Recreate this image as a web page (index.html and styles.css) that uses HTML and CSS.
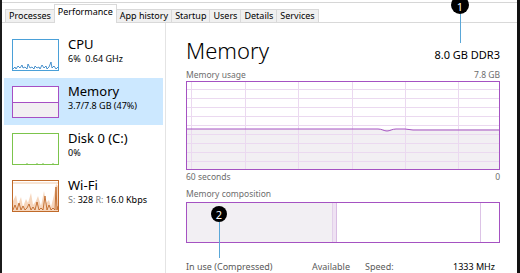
FILE: index.html
```
<html>

<head>
  <title>Task Manager - Performance</title>
  <meta charset="UTF-8">
  <link rel="stylesheet" href="styles.css">
</head>

<body>
  <div id="app">
    <div class="menubar"></div>

    <div class="tabs">
      <span class="tab">Processes</span>
      <span class="tab active">Performance</span>
      <span class="tab">App history</span>
      <span class="tab">Startup</span>
      <span class="tab">Users</span>
      <span class="tab">Details</span>
      <span class="tab">Services</span>
    </div>

    <div class="content">
      <!-- 左侧资源列表 -->
      <div class="sidebar">
        <div class="item">
          <div class="thumb thumb-cpu">
            <svg width="45" height="30" viewBox="0 0 45 30">
              <polyline fill="none" stroke="#1f78c1" stroke-width="0.8"
                points="0,29 2,27 3,29 5,26 7,28 9,25 10,28 12,27 14,29 15,24 17,28 19,27 21,29 22,26 24,28 26,27 27,29 29,25 31,28 33,26 34,29 36,27 38,22 39,28 41,26 43,29 45,27" />
            </svg>
          </div>
          <div class="item-text">
            <p class="item-title">CPU</p>
            <p class="item-sub">6%&nbsp; 0.64 GHz</p>
          </div>
        </div>
        <div class="item selected">
          <div class="thumb thumb-mem">
            <div class="mem-top"></div>
            <div class="mem-bottom"></div>
          </div>
          <div class="item-text">
            <p class="item-title">Memory</p>
            <p class="item-sub">3.7/7.8 GB (47%)</p>
          </div>
        </div>
        <div class="item">
          <div class="thumb thumb-disk">
            <svg width="45" height="30" viewBox="0 0 45 30">
              <path d="M14 29v1M24 29v1M30 29v1M40 29v1" stroke="#7cc44c" stroke-width="1" />
            </svg>
          </div>
          <div class="item-text">
            <p class="item-title">Disk 0 (C:)</p>
            <p class="item-sub">0%</p>
          </div>
        </div>
        <div class="item">
          <div class="thumb thumb-wifi">
            <svg width="45" height="30" viewBox="0 0 45 30">
              <line x1="0" y1="2" x2="45" y2="2" stroke="#f0c9a8" stroke-width="1" />
              <polygon fill="#f6d6bd"
                points="0,30 0,20 3,14 5,24 8,16 10,26 13,18 15,22 18,12 20,24 23,20 25,15 28,25 31,10 33,22 36,19 38,26 41,14 43,3 45,5 45,30" />
              <polyline fill="none" stroke="#b95a17" stroke-width="0.8"
                points="0,29 2,24 4,29 6,22 8,29 10,25 12,29 14,27 16,23 18,29 20,26 22,29 24,21 26,29 28,27 30,29 32,15 34,29 36,24 38,29 40,27 42,29 43,6 44,29 45,25" />
            </svg>
          </div>
          <div class="item-text">
            <p class="item-title">Wi-Fi</p>
            <p class="item-sub"><span class="dim">S:</span> 328 <span class="dim">R:</span> 16.0 Kbps</p>
          </div>
        </div>
      </div>

      <!-- 右侧详细信息 -->
      <div class="panel">
        <div class="panel-head">
          <p class="panel-title">Memory</p>
          <p class="panel-spec">8.0 GB DDR3</p>
        </div>

        <div class="caption">
          <span>Memory usage</span>
          <span>7.8 GB</span>
        </div>
        <div class="chart">
          <svg width="314" height="89" viewBox="0 0 314 89">
            <rect x="0" y="48" width="314" height="41" fill="#f2eff3" />
            <g stroke="#ebd9f0" stroke-width="1">
              <path d="M0 8.5H314M0 17.5H314M0 26.5H314M0 35.5H314M0 44.5H314M0 53.5H314M0 62.5H314M0 71.5H314M0 80.5H314" />
              <path d="M5.5 0V89M59.5 0V89M112.5 0V89M166.5 0V89M219.5 0V89M272.5 0V89" />
            </g>
            <path d="M0 48H192C196 48 198 50 201 50C204 50 206 48 210 48H219C222 48 224 49 227 49H314" fill="none" stroke="#a552c2" stroke-width="1" />
            <rect x="0.5" y="0.5" width="313" height="88" fill="none" stroke="#a552c2" stroke-width="1" />
          </svg>
        </div>
        <div class="caption axis">
          <span>60 seconds</span>
          <span>0</span>
        </div>

        <div class="caption comp-label">
          <span>Memory composition</span>
        </div>
        <div class="composition">
          <div class="seg seg-inuse" style="width: 145px"></div>
          <div class="seg seg-modified" style="width: 3px"></div>
          <div class="seg seg-standby" style="width: 143px"></div>
          <div class="seg seg-free"></div>
        </div>

        <div class="stats">
          <span class="stat-inuse">In use (Compressed)</span>
          <span class="stat-avail">Available</span>
          <span class="stat-speed">Speed:</span>
          <span class="stat-value">1333 MHz</span>
        </div>
      </div>
    </div>

    <!-- 标注 -->
    <div class="callout callout-1"><span class="badge"><span class="num">1</span></span></div>
    <div class="callout callout-2"><span class="badge"><span class="num">2</span></span></div>
  </div>
</body>

</html>
```

FILE: styles.css
```
body {
  font-family: "Noto Sans", "Open Sans", sans-serif;
  background-color: white;
  color: black;
  margin: 0;
  padding: 0;
}

p {
  margin: 0;
}

#app {
  position: relative;
  width: 515px;
  height: 273px;
  border-left: 2px solid #1b1b1b;
  border-right: 3px solid #111;
  overflow: hidden;
  display: flex;
  flex-direction: column;
}

/** 顶部菜单残留 */
.menubar {
  height: 2px;
  border-bottom: 1px solid #d6d6d6;
}

/** 标签页 */
.tabs {
  display: flex;
  flex-direction: row;
  align-items: flex-end;
  height: 19px;
  padding-left: 3px;
  border-bottom: 1px solid #d9d9d9;
}

.tab {
  height: 12px;
  line-height: 12px;
  padding: 0 3px;
  font-size: 9px;
  background-color: #f0f0f0;
  border: 1px solid #d9d9d9;
  border-bottom: none;
  margin-right: -1px;
}

.tab.active {
  height: 18px;
  line-height: 14px;
  background-color: white;
  margin-bottom: -1px;
  position: relative;
}

.content {
  display: flex;
  flex-direction: row;
  flex-grow: 1;
}

/** 左侧列表 */
.sidebar {
  width: 163px;
  border-right: 1px solid #e4e4e4;
  padding-top: 8px;
}

.item {
  display: flex;
  flex-direction: row;
  height: 47px;
  margin-left: 2px;
  width: 159px;
  padding: 8px 0 0 8px;
  box-sizing: border-box;
}

.item.selected {
  background-color: #cce8ff;
}

.thumb {
  width: 45px;
  height: 30px;
  border: 1px solid;
  background-color: white;
  flex-shrink: 0;
}

.thumb svg {
  display: block;
}

.thumb-cpu {
  border-color: #4aa0d8;
}

.thumb-mem {
  border-color: #a64fc4;
  display: flex;
  flex-direction: column;
}

.mem-top {
  height: 15px;
  background-color: white;
  border-bottom: 1px solid #a64fc4;
}

.mem-bottom {
  flex-grow: 1;
  background-color: #f2eff2;
}

.thumb-disk {
  border-color: #7cc44c;
}

.thumb-wifi {
  border-color: #c06a2a;
}

.item-text {
  margin-left: 9px;
  margin-top: -3px;
}

.item-title {
  font-size: 13px;
  line-height: 17px;
}

.item-sub {
  font-size: 9px;
  line-height: 11px;
}

.dim {
  color: #7a7a7a;
}

/** 右侧面板 */
.panel {
  flex-grow: 1;
  padding: 16px 17px 0 20px;
  display: flex;
  flex-direction: column;
}

.panel-head {
  display: flex;
  flex-direction: row;
  justify-content: space-between;
  align-items: baseline;
}

.panel-title {
  font-size: 22px;
  font-weight: 300;
  line-height: 22px;
}

.panel-spec {
  font-size: 11px;
}

.caption {
  display: flex;
  flex-direction: row;
  justify-content: space-between;
  font-size: 8.5px;
  line-height: 9px;
  color: #6d6d6d;
  margin-top: 8px;
  margin-bottom: 2px;
}

.chart svg {
  display: block;
}

.caption.axis {
  margin-top: 2px;
}

.caption.comp-label {
  margin-top: 6px;
  margin-bottom: 4px;
}

/* 内存组成条 */
.composition {
  display: flex;
  flex-direction: row;
  height: 39px;
  border: 1px solid #a552c2;
}

.seg {
  height: 100%;
}

.seg-inuse {
  background-color: #f2eff3;
  border-right: 1px solid #e2cfea;
}

.seg-modified {
  background-color: #efe2f3;
  border-right: 1px solid #d9bde3;
}

.seg-standby {
  background-color: white;
  border-right: 1px solid #dcc3e6;
}

.seg-free {
  flex-grow: 1;
  background-color: white;
}

.stats {
  display: flex;
  flex-direction: row;
  font-size: 9px;
  color: #5a5a5a;
  margin-top: 17px;
}

.stat-inuse {
  width: 126px;
}

.stat-avail {
  width: 53px;
}

.stat-speed {
  flex-grow: 1;
}

.stat-value {
  color: black;
  margin-right: 5px;
}

/** 标注圆点 */
.callout {
  position: absolute;
  display: flex;
  flex-direction: column;
  align-items: center;
}

.callout::after {
  content: "";
  width: 1px;
  background-color: #5aa7d8;
}

.badge {
  display: flex;
  align-items: center;
  justify-content: center;
  border-radius: 50%;
  background-color: black;
  color: white;
  box-sizing: border-box;
}

.num {
  display: block;
  line-height: 11px;
}

.callout-1 {
  left: 449px;
  top: -4px;
}

.callout-1 .badge {
  width: 18px;
  height: 18px;
  align-items: flex-end;
  padding-bottom: 2px;
  font-size: 11px;
}

.callout-1::after {
  height: 29px;
}

.callout-2 {
  left: 209px;
  top: 206px;
}

.callout-2 .badge {
  width: 16px;
  height: 16px;
  font-size: 11px;
}

.callout-2::after {
  height: 36px;
}
```
